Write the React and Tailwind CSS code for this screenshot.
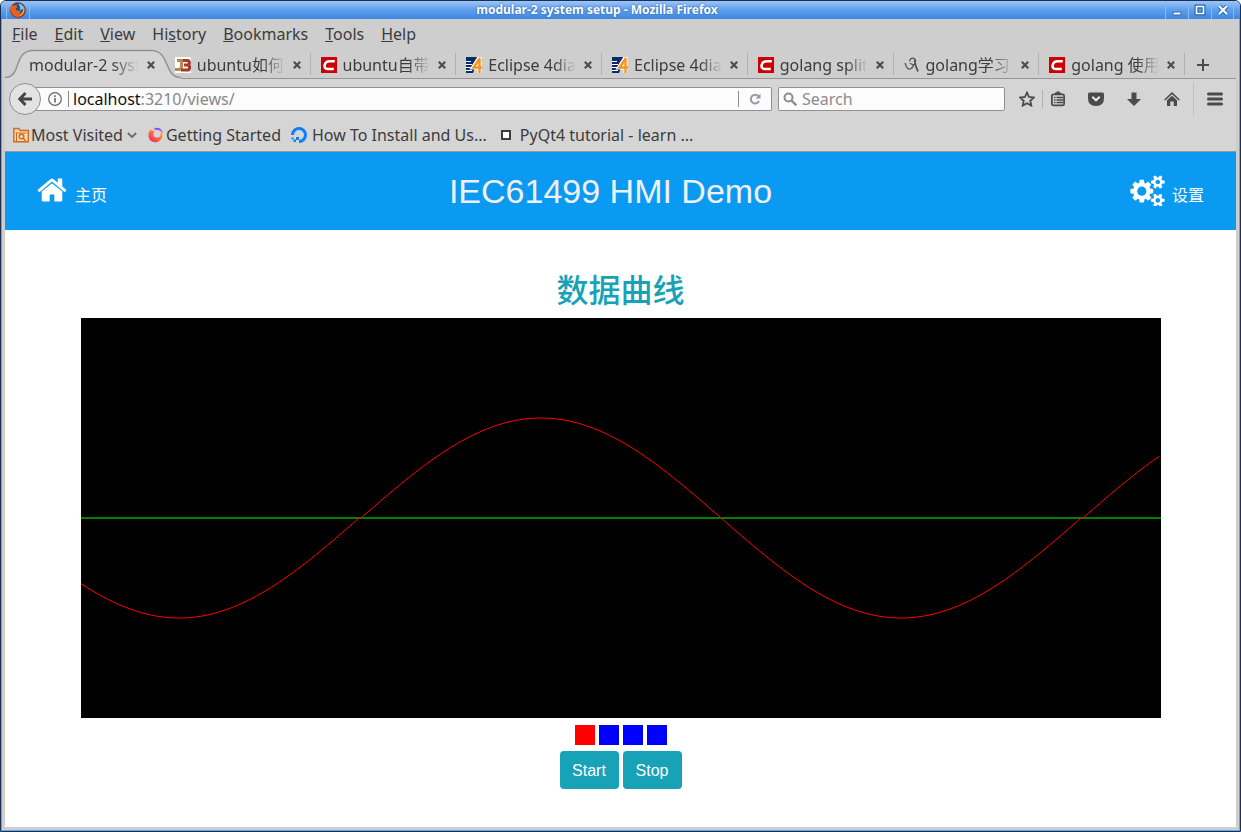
import { useState } from 'react';

const menus = [
  ['', 'F', 'ile'],
  ['', 'E', 'dit'],
  ['', 'V', 'iew'],
  ['Hi', 's', 'tory'],
  ['', 'B', 'ookmarks'],
  ['', 'T', 'ools'],
  ['', 'H', 'elp'],
];

const tabs = [
  { title: 'modular-2 syst' },
  { title: 'ubuntu如何', icon: 'jb' },
  { title: 'ubuntu自带', icon: 'c' },
  { title: 'Eclipse 4dia', icon: 'diac' },
  { title: 'Eclipse 4dia', icon: 'diac' },
  { title: 'golang split', icon: 'c' },
  { title: 'golang学习', icon: 'script' },
  { title: 'golang 使用', icon: 'c' },
];

function Favicon({ name }) {
  if (name === 'jb') {
    return (
      <svg viewBox="0 0 16 16" className="size-4 shrink-0">
        <rect width="16" height="16" fill="#fff" />
        <path d="M2 3.500h5M6.500 2v7.500q0 3-2.500 3H0" fill="none" stroke="#b5894f" strokeWidth="3.200" />
        <path d="M8 3.500h4.500q1.800 0 1.800 2.200T12.500 8H9M12.500 8q2 0 2 2.500T12.500 13H6" fill="none" stroke="#a33a2c" strokeWidth="3.200" />
      </svg>
    );
  }
  if (name === 'c') {
    return (
      <svg viewBox="0 0 16 16" className="size-4 shrink-0">
        <rect width="16" height="16" fill="#cc0000" />
        <path d="M13.800 4.300H8.500Q4.500 4.300 3.700 8T6.500 12h6.300" fill="none" stroke="#fff" strokeWidth="2.600" />
      </svg>
    );
  }
  if (name === 'diac') {
    return (
      <svg viewBox="0 0 16 16" className="size-4 shrink-0">
        <path d="M0 0h13L7 16H0z" fill="#0a2a6c" />
        <path d="M0 4.500h5M0 7.500h6M0 10.500h5M0 13.500h6" stroke="#fff" strokeWidth="1.200" />
        <path d="M13 1 7 10.500h9M13.500 0v16" fill="none" stroke="#fff" strokeWidth="4" />
        <path d="M14 1 7.500 10.500H16M13.500 1v15" fill="none" stroke="#f7941d" strokeWidth="2.400" />
      </svg>
    );
  }
  return (
    <svg viewBox="0 0 16 16" className="size-4 shrink-0" fill="none" stroke="#555">
      <path d="M1 6q2 7 5 6t4-5M5.500 4.500Q6 1 9 1.200T11.500 5 8.500 7.500 6 6" strokeWidth="1.200" />
      <path d="M10.500 2.500q.5 6 3.500 12" strokeWidth="1.800" />
    </svg>
  );
}

function CloseIcon() {
  return (
    <svg viewBox="0 0 8 8" className="size-2" stroke="#4d4d4d" strokeWidth="2.200">
      <path d="M.8.8l6.400 6.400M7.200.8.800 7.200" />
    </svg>
  );
}

function Tab({ tab, active }) {
  return (
    <div className={`relative flex min-w-0 flex-1 items-center pr-[6px] pl-[10px] ${active ? 'z-10' : ''}`}>
      {active ? (
        <svg
          viewBox="0 0 176 30"
          preserveAspectRatio="none"
          className="absolute -right-4 -bottom-px -left-[14px] h-[30px] w-[176px]"
        >
          <path
            d="M0 28.500C17 28.500 8 1.500 28 1.500H146C166 1.500 158 28.500 176 28.500V30H0z"
            fill="#d5d5d5"
          />
          <path
            d="M0 28.500C17 28.500 8 1.500 28 1.500H146C166 1.500 158 28.500 176 28.500"
            fill="none"
            stroke="#8d9499"
            strokeWidth="1.500"
          />
        </svg>
      ) : (
        <span className="absolute right-0 bottom-[3px] h-[22px] w-px bg-[#b0b0b0]" />
      )}
      {tab.icon && (
        <span className="mr-[6px]">
          <Favicon name={tab.icon} />
        </span>
      )}
      <span className="relative min-w-0 flex-1 overflow-hidden whitespace-nowrap mask-r-from-75% mask-r-to-100%">
        {tab.title}
      </span>
      <button type="button" aria-label="Close tab" className="relative ml-1 p-1">
        <CloseIcon />
      </button>
    </div>
  );
}

function TitleBar() {
  return (
    <div className="flex h-[18px] items-center bg-linear-to-b from-[#9cc6f8] via-[#5e9eec] to-[#3d87df] pr-[6px] pl-[5px]">
      <span className="flex h-full items-center border-x border-[#8ab8f1] px-[3px]">
        <svg viewBox="0 0 16 16" className="size-4">
          <circle cx="8" cy="8" r="7.800" fill="#8a2f10" />
          <circle cx="9" cy="6.500" r="5.500" fill="#1f5596" />
          <path d="M8.500 1.500q5 .5 4.500 5-1 2-3 1 .5-3-1.500-6z" fill="#8cc4ea" />
          <path d="M1 3q1.500-.5 3 1 1-1.500 3-1.500-1 1.500.5 3-2.500.5-1.500 2.500 2 1.500 4.500 0 .5 2.500-2 3.500 4 .5 5.500-5 1 4-1.500 6.500-4.500 3.500-9 .5Q-1 9.500 1 3z" fill="#e8641b" />
          <path d="M13.500 4.500q2.500 6-3.500 9.500 4.500-3.500 3.500-9.500z" fill="#fbc02d" stroke="#fbc02d" strokeWidth=".6" />
        </svg>
      </span>
      <span className="flex-1 pr-px text-center text-xs leading-[18px] font-bold text-white text-shadow-[0_0_2px_#1b4f94]">
        modular-2 system setup - Mozilla Firefox
      </span>
      <div className="flex h-full text-white">
        <button type="button" aria-label="Minimize" className="flex w-[23px] items-center justify-center border-l border-[#8ab8f1]">
          <svg viewBox="0 0 12 12" className="size-3">
            <path d="M2 8h8v3H2z" fill="#fff" stroke="#2a66b0" />
          </svg>
        </button>
        <button type="button" aria-label="Maximize" className="flex w-[23px] items-center justify-center border-l border-[#8ab8f1]">
          <svg viewBox="0 0 12 12" className="size-3" fill="none">
            <path d="M2.500 2.500h7v7h-7z" stroke="#2a66b0" strokeWidth="4" />
            <path d="M2.500 2.500h7v7h-7z" stroke="#fff" strokeWidth="1.600" />
          </svg>
        </button>
        <button type="button" aria-label="Close" className="flex w-[23px] items-center justify-center border-x border-[#8ab8f1]">
          <svg viewBox="0 0 12 12" className="size-3">
            <path d="M2 2l8 8M10 2l-8 8" stroke="#2a66b0" strokeWidth="4" />
            <path d="M2 2l8 8M10 2l-8 8" stroke="#fff" strokeWidth="2.200" />
          </svg>
        </button>
      </div>
    </div>
  );
}

function NavBar() {
  return (
    <div className="flex h-[40px] items-center bg-[#d5d5d5] pl-1">
      <button
        type="button"
        aria-label="Back"
        className="relative z-10 flex size-8 shrink-0 items-center justify-center rounded-full border border-[#8e8e8e] bg-[#e3e3e3]"
      >
        <svg viewBox="0 0 16 16" className="size-4" fill="none" stroke="#454545" strokeWidth="3">
          <path d="M8.500 2 2.800 8l5.700 6M3 8h12" />
        </svg>
      </button>
      <div className="-ml-2 flex h-6 flex-1 items-center rounded-r-xs border border-[#919191] bg-[#fcfcfc] pl-[14px]">
        <svg viewBox="0 0 14 14" className="size-[14px] shrink-0" fill="none" stroke="#666" strokeWidth="1.200">
          <circle cx="7" cy="7" r="6.300" />
          <path d="M7 6v4.500M7 3.300v1.600" strokeWidth="1.600" />
        </svg>
        <span className="mr-1 ml-[6px] h-4 w-px bg-[#8a8a8a]" />
        <div className="flex-1 text-[#888]">
          <span className="text-[#111]">localhost</span>:3210/views/
        </div>
        <span className="h-4 w-px bg-[#8a8a8a]" />
        <button type="button" aria-label="Reload" className="flex w-8 justify-center">
          <svg viewBox="0 0 12 12" className="size-3" fill="none" stroke="#929ca6" strokeWidth="2">
            <path d="M9.500 3.500A4.300 4.300 0 1 0 10 8" />
            <path d="M11.500.500v5h-5z" fill="#929ca6" stroke="none" />
          </svg>
        </button>
      </div>
      <label className="ml-[6px] flex h-6 w-[227px] items-center rounded-xs border border-[#919191] bg-[#fcfcfc] pl-1">
        <svg viewBox="0 0 14 14" className="size-[14px] shrink-0" fill="none" stroke="#8c8c8c" strokeWidth="2">
          <circle cx="5.500" cy="5.500" r="4" />
          <path d="M8.500 8.500l4.800 4.800" strokeWidth="2.400" />
        </svg>
        <input
          type="text"
          placeholder="Search"
          aria-label="Search"
          className="ml-[5px] w-full min-w-0 outline-none placeholder:text-[#8c8c8c]"
        />
      </label>
      <div className="flex h-full items-center text-[#4b4b4b]">
        <button type="button" aria-label="Bookmark this page" className="ml-[14px]">
          <svg viewBox="0 0 16 16" className="size-4" fill="none" stroke="currentColor" strokeWidth="1.800">
            <path d="M8 1.500l2 4.500 4.900.5-3.600 3.300 1 4.800L8 12.200l-4.300 2.400 1-4.800L1.100 6.500 6 6z" />
          </svg>
        </button>
        <span className="mx-[7px] h-[18px] w-px bg-[#b0b0b0]" />
        <button type="button" aria-label="Bookmarks">
          <svg viewBox="0 0 16 16" className="size-4" fill="none" stroke="currentColor">
            <rect x="1.900" y="3.400" width="12.200" height="11" rx="1.500" strokeWidth="1.800" />
            <path d="M5 3.500V1.500h1.500V.500h3v1H11v2z" fill="currentColor" stroke="none" />
            <path d="M4 6.500h1.500M6.500 6.500H13M4 9h1.500M6.500 9H13M4 11.500h1.500M6.500 11.500H13" strokeWidth="1.300" />
          </svg>
        </button>
        <button type="button" aria-label="Pocket" className="ml-[22px]">
          <svg viewBox="0 0 16 16" className="size-4">
            <path d="M1.500 1.500h13q1.500 0 1.500 1.500v4q0 8-8 8T0 7V3q0-1.500 1.500-1.500z" fill="currentColor" />
            <path d="M4.300 5.700 8 9.300l3.700-3.600" fill="none" stroke="#e8e8e8" strokeWidth="2" />
          </svg>
        </button>
        <button type="button" aria-label="Downloads" className="ml-[22px]">
          <svg viewBox="0 0 16 16" className="size-4" fill="currentColor">
            <path d="M5.500 1.500h5V8H15l-7 7-7-7h4.500z" />
          </svg>
        </button>
        <button type="button" aria-label="Home" className="ml-[22px]">
          <svg viewBox="0 0 16 16" className="size-4" fill="currentColor">
            <path d="M8 1l7.800 7.500-1 1.100L8 3.300 1.200 9.600l-1-1.100z" />
            <path d="M8 4.700 13 9.300V15H9.700v-4.500H6.300V15H3V9.300z" />
          </svg>
        </button>
        <span className="ml-[13px] h-[34px] w-px bg-[#c0c0c0]" />
        <button type="button" aria-label="Open menu" className="mr-[13px] ml-[13px]">
          <svg viewBox="0 0 16 16" className="size-4" stroke="currentColor" strokeWidth="3" strokeLinecap="round">
            <path d="M1.500 3h13M1.500 8h13M1.500 13h13" />
          </svg>
        </button>
      </div>
    </div>
  );
}

function BookmarksBar() {
  return (
    <div className="flex h-[33px] items-center border-b border-[#989898] bg-[#d5d5d5] pl-2 whitespace-nowrap">
      <button type="button" className="flex items-center">
        <svg viewBox="0 0 16 16" className="mr-[2px] size-4" fill="none" stroke="#d2691e">
          <path d="M.8 14.800V1.500h5l1.500 2h8v11.300z" fill="#f8d9b0" strokeWidth="1.400" />
          <path d="M2.500 6h11M3.500 6v8.500" />
          <circle cx="8.500" cy="9.500" r="2.300" strokeWidth="1.400" />
          <path d="M10.200 11.200l2.500 2.500" strokeWidth="1.600" />
        </svg>
        Most Visited
        <svg viewBox="0 0 10 10" className="ml-1 size-[10px]" fill="none" stroke="#6a6a6a" strokeWidth="1.800">
          <path d="M.8 3 5 7l4.200-4" />
        </svg>
      </button>
      <a href="#start" className="ml-[11px] flex items-center">
        <svg viewBox="0 0 16 16" className="mr-[2px] size-4">
          <defs>
            <linearGradient id="fox" x1="1" y1="0" x2="0.200" y2="1">
              <stop offset="0" stopColor="#ffd43a" />
              <stop offset=".45" stopColor="#ff7a2f" />
              <stop offset="1" stopColor="#f0246e" />
            </linearGradient>
          </defs>
          <path d="M2.500 2.500Q3 4 5 3.500l9 1.500q1.500 4-1 7.500-2.500 3-6 2.800Q1.500 15 .5 9.500 0 5.500 2.500 2.500z" fill="url(#fox)" />
          <path d="M5.500 2Q8 0 11 1q3.500 1.500 3.800 5.500-1-3-4.300-3.300Q8 2.800 5.500 2z" fill="#8a4dff" />
          <circle cx="9" cy="7" r="3.500" fill="#dcd2e2" />
        </svg>
        Getting Started
      </a>
      <a href="#install" className="ml-[10px] flex items-center">
        <svg viewBox="0 0 16 16" className="mr-[5px] size-4">
          <path d="M1.500 8A6.500 6.500 0 1 1 8 14.500" fill="none" stroke="#0a80ff" strokeWidth="3" />
          <path d="M5 10h3v3H5zM2.500 12.500H5V15H2.500zM.5 10.500h2v2h-2z" fill="#0a80ff" />
        </svg>
        How To Install and Us...
      </a>
      <a href="#pyqt" className="ml-[14px] flex items-center">
        <span className="mr-[9px] size-[10px] border-2 border-[#3a3d42] bg-white" />
        PyQt4 tutorial - learn ...
      </a>
    </div>
  );
}

function wavePath() {
  const points = [];
  for (let x = 0; x <= 1078; x++) {
    let start = 280;
    if (x < 279) start = 278;
    if (x > 1001) start = 282;
    const y = 200 - 100 * Math.sin(((x - start) * Math.PI) / 360);
    points.push(`${x} ${y.toFixed(2)}`);
  }
  return `M${points.join('L')}`;
}

function Chart() {
  return (
    <svg viewBox="0 0 1080 400" className="block w-full max-w-[1080px] bg-black">
      <path d="M0 200H1080" stroke="#008000" strokeWidth="2" />
      <path d={wavePath()} fill="none" stroke="#f00" />
    </svg>
  );
}

function Page() {
  const [lit, setLit] = useState(0);

  return (
    <div className="flex-1 bg-white font-['Liberation_Sans','Noto_Sans_CJK_SC',sans-serif] text-base">
      <header className="flex h-[78px] items-center bg-[#0a9af2] pr-8 pl-[31px] text-white">
        <a href="#home" className="flex items-start">
          <svg viewBox="0 0 1792 1792" className="mr-[7px] size-8" fill="currentColor">
            <path d="M1472 992v480q0 26-19 45t-45 19h-384v-384h-256v384h-384q-26 0-45-19t-19-45v-480q0-1 .5-3t.5-3l575-474 575 474q1 2 1 6zm223-69l-62 74q-8 9-21 11h-3q-13 0-21-7l-692-577-692 577q-12 8-24 7-13-2-21-11l-62-74q-8-10-7-23.500t11-21.500l719-599q32-26 76-26t76 26l244 204v-195q0-14 9-23t23-9h192q14 0 23 9t9 23v408l219 182q10 8 11 21.500t-7 23.500z" />
          </svg>
          <span className="pt-[10px]">主页</span>
        </a>
        <h1 className="flex-1 pr-4 text-center text-[34px] leading-10 text-[#f0f0f5]">IEC61499 HMI Demo</h1>
        <a href="#settings" className="flex items-start">
          <svg viewBox="0 0 1920 1792" className="mr-[7px] h-8 w-[35px]" fill="currentColor">
            <path d="M896 960q0-106-75-181t-181-75-181 75-75 181 75 181 181 75 181-75 75-181zm768 512q0-52-38-90t-90-38-90 38-38 90q0 53 37.500 90.500t90.500 37.500 90.500-37.500 37.500-90.500zm0-1024q0-52-38-90t-90-38-90 38-38 90q0 53 37.500 90.500t90.500 37.500 90.500-37.500 37.500-90.500zm-384 421v185q0 10-7 19.500t-16 10.500l-155 24q-11 35-32 76 34 48 90 115 7 11 7 20 0 12-7 19-23 30-82.500 89.500t-78.500 59.500q-11 0-21-7l-115-90q-37 19-77 31-11 108-23 155-7 24-30 24h-186q-11 0-20-7.500t-10-17.500l-23-153q-34-10-75-31l-118 89q-7 7-20 7-11 0-21-8-144-133-144-160 0-9 7-19 10-14 41-53t47-61q-23-44-35-82l-152-24q-10-1-17-9.500t-7-19.500v-185q0-10 7-19.500t16-10.500l155-24q11-35 32-76-34-48-90-115-7-11-7-20 0-12 7-20 22-30 82-89t79-59q11 0 21 7l115 90q34-18 77-32 11-108 23-154 7-24 30-24h186q11 0 20 7.500t10 17.500l23 153q34 10 75 31l118-89q8-7 20-7 11 0 21 8 144 133 144 160 0 8-7 19-12 16-42 54t-45 60q23 48 34 82l152 23q10 2 17 10.500t7 19.500zm640 533v140q0 16-149 31-12 27-30 52 51 113 51 138 0 4-4 7-122 71-124 71-8 0-46-47t-52-68q-20 2-30 2t-30-2q-14 21-52 68t-46 47q-2 0-124-71-4-3-4-7 0-25 51-138-18-25-30-52-149-15-149-31v-140q0-16 149-31 13-29 30-52-51-113-51-138 0-4 4-7 4-2 35-20t59-34 30-16q8 0 46 46.500t52 67.500q20-2 30-2t30 2q51-71 92-112l6-2q4 0 124 70 4 3 4 7 0 25-51 138 17 23 30 52 149 15 149 31zm0-1024v140q0 16-149 31-12 27-30 52 51 113 51 138 0 4-4 7-122 71-124 71-8 0-46-47t-52-68q-20 2-30 2t-30-2q-14 21-52 68t-46 47q-2 0-124-71-4-3-4-7 0-25 51-138-18-25-30-52-149-15-149-31v-140q0-16 149-31 13-29 30-52-51-113-51-138 0-4 4-7 4-2 35-20t59-34 30-16q8 0 46 46.500t52 67.500q20-2 30-2t30 2q51-71 92-112l6-2q4 0 124 70 4 3 4 7 0 25-51 138 17 23 30 52 149 15 149 31z" />
          </svg>
          <span className="pt-[10px]">设置</span>
        </a>
      </header>

      <main className="flex flex-col items-center pt-[41px] pb-[38px]">
        <h2 className="mb-[7px] text-[32px] leading-10 font-medium text-[#17a2b8]">数据曲线</h2>
        <Chart />
        <div className="mt-[7px] flex gap-1">
          {[0, 1, 2, 3].map((i) => (
            <span key={i} className={`size-5 ${i === lit ? 'bg-[#f00]' : 'bg-[#00f]'}`} />
          ))}
        </div>
        <div className="mt-[6px] flex gap-1">
          <button
            type="button"
            onClick={() => setLit((lit + 1) % 4)}
            className="w-[59px] rounded-sm bg-[#17a2b8] pt-2 pb-[6px] leading-6 text-white"
          >
            Start
          </button>
          <button
            type="button"
            onClick={() => setLit(0)}
            className="w-[59px] rounded-sm bg-[#17a2b8] pt-2 pb-[6px] leading-6 text-white"
          >
            Stop
          </button>
        </div>
      </main>
    </div>
  );
}

export default function App() {
  return (
    <div className="flex min-h-screen flex-col overflow-hidden rounded-t-md border border-[#1c2f50] bg-[#cecece] font-['Noto_Sans','Noto_Sans_CJK_SC',sans-serif] text-base leading-6 text-[#3c3c3c]">
      <TitleBar />
      <div className="flex flex-1 flex-col border border-t-0 border-[#63a6f5]">
        <div className="flex flex-1 flex-col px-[3px] pb-[3px]">
          <nav className="flex h-[29px] items-center gap-[17px] pl-[7px]">
            {menus.map(([before, key, after]) => (
              <button key={key + after} type="button">
                {before}
                <span className="underline">{key}</span>
                {after}
              </button>
            ))}
          </nav>
          <div className="flex h-[31px] border-b border-[#959595] pt-1 pl-[14px]">
            {tabs.map((tab, i) => (
              <Tab key={i} tab={tab} active={i === 0} />
            ))}
            <button type="button" aria-label="New tab" className="flex w-[51px] items-center pl-3">
              <svg viewBox="0 0 12 12" className="size-3" stroke="#4b4b4b" strokeWidth="2">
                <path d="M6 0v12M0 6h12" />
              </svg>
            </button>
          </div>
          <NavBar />
          <BookmarksBar />
          <Page />
        </div>
      </div>
    </div>
  );
}
